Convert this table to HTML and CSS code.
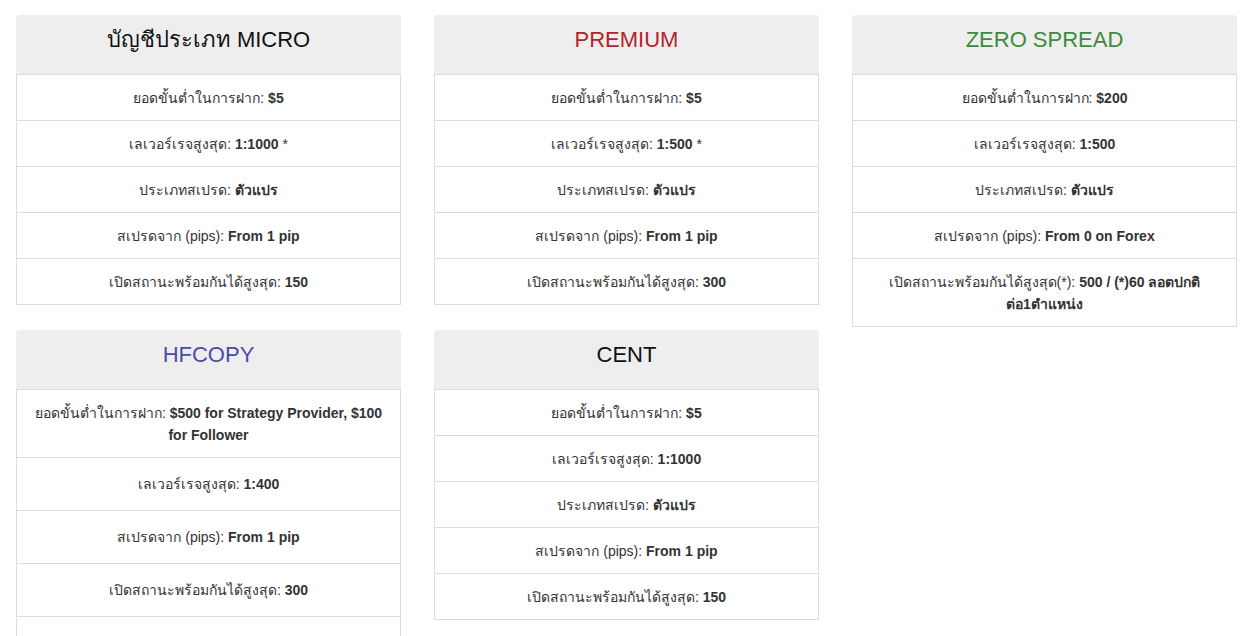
FILE: index.html
```html
<!DOCTYPE html>
<html lang="th">
<head>
<meta charset="utf-8">
<title>Account types</title>
<link rel="stylesheet" href="styles.css">
</head>
<body>
<div class="grid">
  <div class="card">
    <div class="card-head">บัญชีประเภท MICRO</div>
    <div class="row">ยอดขั้นต่ำในการฝาก: <b>$5</b></div>
    <div class="row">เลเวอร์เรจสูงสุด: <b>1:1000</b> *</div>
    <div class="row">ประเภทสเปรด: <b>ตัวแปร</b></div>
    <div class="row">สเปรดจาก (pips): <b>From 1 pip</b></div>
    <div class="row">เปิดสถานะพร้อมกันได้สูงสุด: <b>150</b></div>
  </div>
  <div class="card">
    <div class="card-head red">PREMIUM</div>
    <div class="row">ยอดขั้นต่ำในการฝาก: <b>$5</b></div>
    <div class="row">เลเวอร์เรจสูงสุด: <b>1:500</b> *</div>
    <div class="row">ประเภทสเปรด: <b>ตัวแปร</b></div>
    <div class="row">สเปรดจาก (pips): <b>From 1 pip</b></div>
    <div class="row">เปิดสถานะพร้อมกันได้สูงสุด: <b>300</b></div>
  </div>
  <div class="card">
    <div class="card-head green">ZERO SPREAD</div>
    <div class="row">ยอดขั้นต่ำในการฝาก: <b>$200</b></div>
    <div class="row">เลเวอร์เรจสูงสุด: <b>1:500</b></div>
    <div class="row">ประเภทสเปรด: <b>ตัวแปร</b></div>
    <div class="row">สเปรดจาก (pips): <b>From 0 on Forex</b></div>
    <div class="row">เปิดสถานะพร้อมกันได้สูงสุด(*): <b>500 / (*)60 ลอตปกติต่อ1ตำแหน่ง</b></div>
  </div>
  <div class="card tall">
    <div class="card-head blue">HFCOPY</div>
    <div class="row first">ยอดขั้นต่ำในการฝาก: <b>$500 for Strategy Provider, $100 for Follower</b></div>
    <div class="row">เลเวอร์เรจสูงสุด: <b>1:400</b></div>
    <div class="row">สเปรดจาก (pips): <b>From 1 pip</b></div>
    <div class="row">เปิดสถานะพร้อมกันได้สูงสุด: <b>300</b></div>
    <div class="row">&nbsp;</div>
  </div>
  <div class="card">
    <div class="card-head">CENT</div>
    <div class="row">ยอดขั้นต่ำในการฝาก: <b>$5</b></div>
    <div class="row">เลเวอร์เรจสูงสุด: <b>1:1000</b></div>
    <div class="row">ประเภทสเปรด: <b>ตัวแปร</b></div>
    <div class="row">สเปรดจาก (pips): <b>From 1 pip</b></div>
    <div class="row">เปิดสถานะพร้อมกันได้สูงสุด: <b>150</b></div>
  </div>
</div>
</body>
</html>
```
FILE: styles.css
```css
html, body {
  margin: 0;
  padding: 0;
  background: #fff;
  overflow: hidden;
}
body {
  font-family: "Liberation Sans", Arial, "Noto Sans", sans-serif;
  color: #333;
  font-size: 14px;
}
.grid {
  display: grid;
  grid-template-columns: repeat(3, 385px);
  column-gap: 33px;
  row-gap: 3px;
  align-items: start;
  padding: 15px 0 0 16px;
}
.card-head {
  background: #eeeeee;
  border-radius: 4px 4px 0 0;
  border-bottom: 1px solid #dddddd;
  text-align: center;
  font-size: 22px;
  line-height: 26px;
  padding: 12px 10px 21px;
  color: #111;
}
.card-head.red { color: #b5232a; }
.card-head.green { color: #3d8b3d; }
.card-head.blue { color: #4b4ba8; }
.row {
  border: 1px solid #dddddd;
  border-top: none;
  text-align: center;
  line-height: 22px;
  padding: 11.5px 16px;
}
.row b { font-weight: bold; color: #333; }
.tall .row {
  padding: 15px 16px;
}
.tall .row.first {
  padding: 11.5px 16px;
}
```
